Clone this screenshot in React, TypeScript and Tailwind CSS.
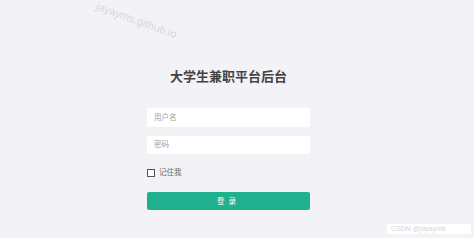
export default function App() {
  return (
    <div
      className="relative h-[238px] w-[474px] overflow-hidden bg-[#f3f3f7]"
      style={{ fontFamily: '"Liberation Sans", "Noto Sans CJK SC", sans-serif' }}
    >
      {/* watermark */}
      <div className="absolute left-[94px] top-[12px] rotate-[20deg] text-[11px] text-[#d6d6dc]">
        jayayms.github.io
      </div>

      <div className="flex flex-col items-center pr-[17px] pt-[68px]">
        <h1 className="text-[13px] font-bold leading-[18px] text-[#444]">大学生兼职平台后台</h1>

        <form className="mt-[22px] flex w-[163px] flex-col">
          <div className="flex h-[19px] items-center rounded-[2px] bg-white px-[7px] text-[7.5px] text-[#a0a0a0]">
            用户名
          </div>
          <div className="mt-[9px] flex h-[18px] items-center rounded-[2px] bg-white px-[7px] text-[7.5px] text-[#a0a0a0]">
            密码
          </div>
          <label className="mt-[13px] flex items-center gap-[4px] text-[7.5px] text-[#666]">
            <span className="h-[8px] w-[8px] border border-[#555] bg-white" />
            记住我
          </label>
          <button
            type="button"
            className="mt-[14px] flex h-[18px] items-center justify-center rounded-[2px] bg-[#20b08e] text-[7.5px] tracking-[4px] text-white"
          >
            登录
          </button>
        </form>
      </div>

      {/* bottom right watermark */}
      <div className="absolute bottom-[4px] left-[387px] h-[10px] w-[84px] bg-white pl-[4px] text-[7px] leading-[10px] text-[#d4d4d8]">
        CSDN @jayayms
      </div>
    </div>
  );
}
